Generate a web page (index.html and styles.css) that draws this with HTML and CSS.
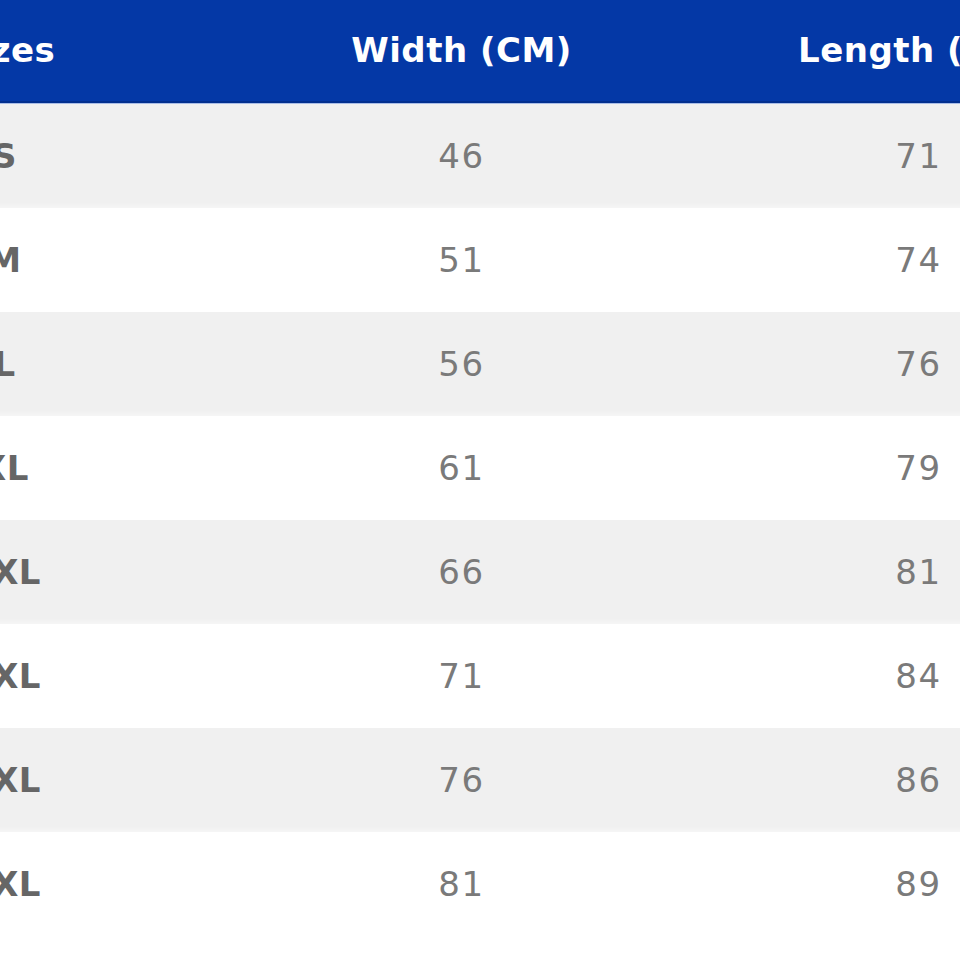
FILE: index.html
```html
<!DOCTYPE html>
<html>
<head>
<meta charset="utf-8">
<link rel="stylesheet" href="styles.css">
</head>
<body>
<div class="chart">
  <div class="row head">
    <div class="cell">Sizes</div>
    <div class="cell">Width (CM)</div>
    <div class="cell">Length (CM)</div>
  </div>
  <div class="row odd"><div class="cell size">S</div><div class="cell">46</div><div class="cell">71</div></div>
  <div class="row"><div class="cell size">M</div><div class="cell">51</div><div class="cell">74</div></div>
  <div class="row odd"><div class="cell size">L</div><div class="cell">56</div><div class="cell">76</div></div>
  <div class="row"><div class="cell size">XL</div><div class="cell">61</div><div class="cell">79</div></div>
  <div class="row odd"><div class="cell size">2XL</div><div class="cell">66</div><div class="cell">81</div></div>
  <div class="row"><div class="cell size">3XL</div><div class="cell">71</div><div class="cell">84</div></div>
  <div class="row odd"><div class="cell size">4XL</div><div class="cell">76</div><div class="cell">86</div></div>
  <div class="row"><div class="cell size">5XL</div><div class="cell">81</div><div class="cell">89</div></div>
</div>
</body>
</html>
```
FILE: styles.css
```css
html, body {
  margin: 0;
  padding: 0;
  background: #ffffff;
  overflow: hidden;
  width: 960px;
  height: 960px;
}
.chart {
  width: 1371px;
  margin-left: -224px;
  font-family: "DejaVu Sans", sans-serif;
}
.row {
  display: grid;
  grid-template-columns: 457px 457px 457px;
  height: 104px;
  align-items: center;
  background: #ffffff;
}
.row.odd {
  background: #f0f0f0;
  box-shadow: inset 0 -6px 4px -4px #f7f7f7;
}
.row.head {
  background: #0438a6;
  border-bottom: 2px solid #022f8e;
  box-shadow: 0 1px 0 #a9bde6;
  height: 101px;
  margin-bottom: 1px;
}
.cell {
  text-align: center;
  font-size: 34px;
  letter-spacing: 1.5px;
  color: #7a7a7a;
}
.row.head .cell {
  color: #ffffff;
  font-weight: bold;
  font-size: 34px;
  letter-spacing: 0.5px;
  padding-bottom: 2px;
}
.cell.size {
  color: #666666;
  font-weight: bold;
  letter-spacing: 0.5px;
}
```
